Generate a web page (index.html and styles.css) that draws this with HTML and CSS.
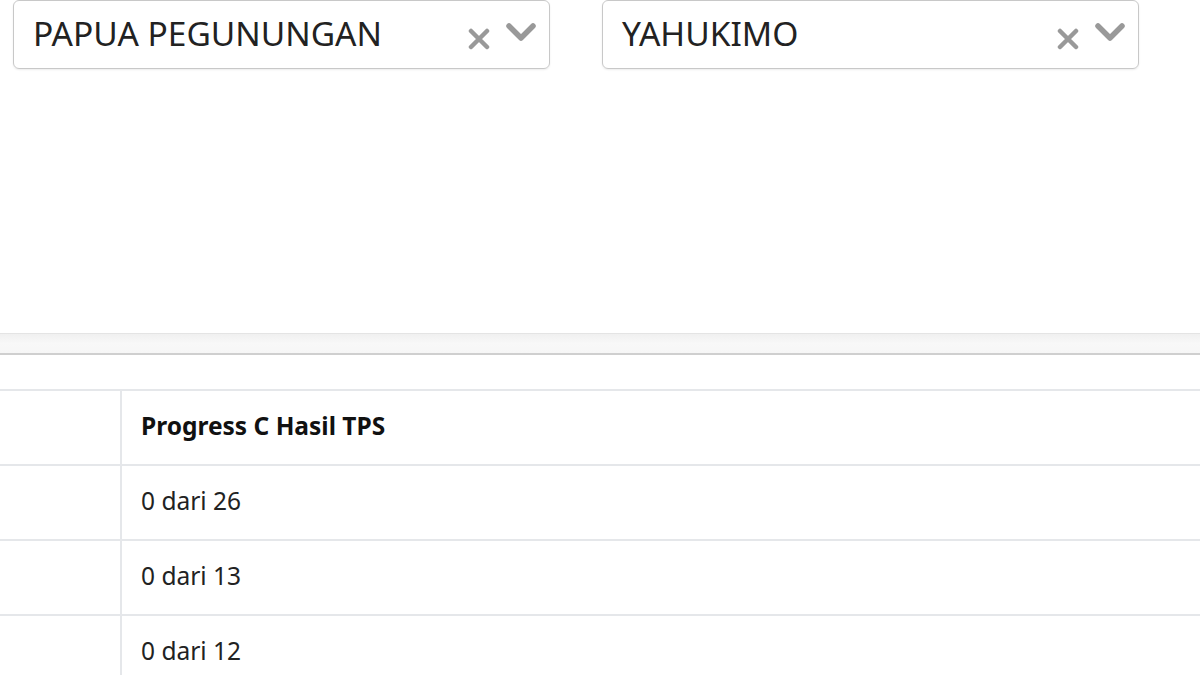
FILE: index.html
```html
<!DOCTYPE html>
<html>
<head>
<meta charset="utf-8">
<link rel="stylesheet" href="styles.css">
</head>
<body>
<div class="filters">
  <div class="select">
    <span class="value">PAPUA PEGUNUNGAN</span>
    <span class="icons">
      <svg class="clear" width="22" height="22" viewBox="0 0 22 22"><path d="M3 3 L19 19 M19 3 L3 19" stroke="#999" stroke-width="4.5" stroke-linecap="round"/></svg>
      <svg class="caret" width="32" height="22" viewBox="0 0 32 22"><path d="M4 5 L16 17 L28 5" fill="none" stroke="#999" stroke-width="5.5" stroke-linecap="round" stroke-linejoin="round"/></svg>
    </span>
  </div>
  <div class="select">
    <span class="value">YAHUKIMO</span>
    <span class="icons">
      <svg class="clear" width="22" height="22" viewBox="0 0 22 22"><path d="M3 3 L19 19 M19 3 L3 19" stroke="#999" stroke-width="4.5" stroke-linecap="round"/></svg>
      <svg class="caret" width="32" height="22" viewBox="0 0 32 22"><path d="M4 5 L16 17 L28 5" fill="none" stroke="#999" stroke-width="5.5" stroke-linecap="round" stroke-linejoin="round"/></svg>
    </span>
  </div>
</div>
<div class="band"></div>
<table class="grid">
  <thead>
    <tr><th class="first"></th><th>Progress C Hasil TPS</th></tr>
  </thead>
  <tbody>
    <tr><td class="first"></td><td>0 dari 26</td></tr>
    <tr><td class="first"></td><td>0 dari 13</td></tr>
    <tr><td class="first"></td><td>0 dari 12</td></tr>
  </tbody>
</table>
</body>
</html>
```
FILE: styles.css
```css
html, body {
  margin: 0;
  padding: 0;
  background: #fff;
  font-family: "Noto Sans", "Open Sans", sans-serif;
  color: #212529;
  overflow: hidden;
}
.filters {
  display: flex;
  gap: 52px;
  padding-left: 13px;
  height: 333px;
  align-items: flex-start;
}
.select {
  box-sizing: border-box;
  width: 537px;
  height: 69px;
  border: 1px solid #c8c8c8;
  border-radius: 6px;
  display: flex;
  align-items: center;
  padding-left: 19px;
  padding-right: 12px;
  box-shadow: 0 1px 2px rgba(0,0,0,0.08);
}
.value {
  flex: 1;
  font-size: 33.5px;
  color: #222;
  line-height: 1;
  margin-top: -2px;
}
.icons {
  display: flex;
  align-items: flex-start;
  gap: 15px;
  height: 30px;
}
.clear { margin-top: 8px; }
.caret { margin-top: 1px; }
.band {
  height: 22px;
  box-sizing: border-box;
  border-top: 1px solid #e4e4e4;
  border-bottom: 2px solid #cfcfcf;
  background: linear-gradient(#f0f0f0, #f8f8f8 50%, #f6f6f6);
}
.grid {
  margin-top: 34px;
  width: 100%;
  border-collapse: collapse;
  font-size: 24.5px;
}
.grid th, .grid td {
  border-top: 2px solid #e5e7ea;
  border-bottom: 2px solid #e5e7ea;
  text-align: left;
  padding: 0 19px 4px 19px;
  box-sizing: border-box;
}
.grid th {
  font-weight: bold;
  color: #111;
  font-size: 24.5px;
  height: 75px;
}
.grid td { color: #222; height: 75px; }
.grid .first {
  width: 121px;
  padding: 0;
  border-right: 2px solid #e5e7ea;
}
```
